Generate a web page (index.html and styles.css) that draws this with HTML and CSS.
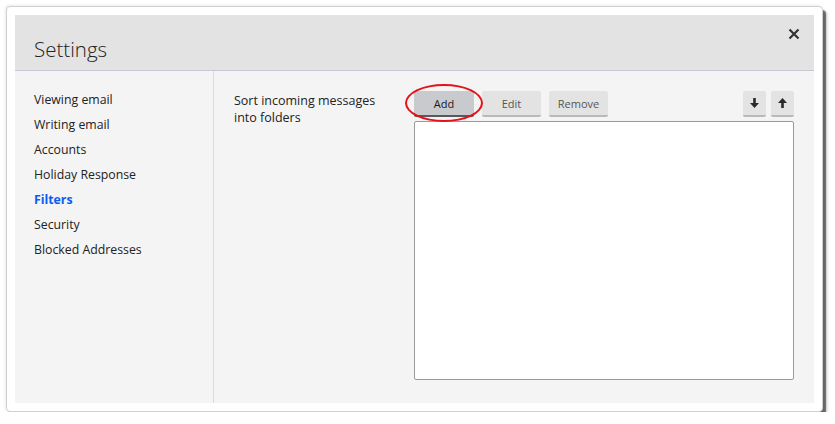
FILE: index.html
```html
<!DOCTYPE html>
<html>
<head>
<meta charset="utf-8">
<link rel="stylesheet" href="styles.css">
</head>
<body>
<div class="frame">
  <div class="dialog">
    <div class="header">
      <h1 class="title">Settings</h1>
      <button class="close" aria-label="Close">
        <svg width="12" height="12" viewBox="0 0 12 12"><path d="M1.5 1.5L10.5 10.5M10.5 1.5L1.5 10.5" stroke="#333" stroke-width="2.2" fill="none"/></svg>
      </button>
    </div>
    <div class="body">
      <nav class="nav">
        <a class="nav-item">Viewing email</a>
        <a class="nav-item">Writing email</a>
        <a class="nav-item">Accounts</a>
        <a class="nav-item">Holiday Response</a>
        <a class="nav-item active">Filters</a>
        <a class="nav-item">Security</a>
        <a class="nav-item">Blocked Addresses</a>
      </nav>
      <div class="content">
        <div class="label">Sort incoming messages into folders</div>
        <div class="panel">
          <div class="toolbar">
            <div class="btn-wrap">
              <button class="btn primary">Add</button>
              <span class="ring"></span>
            </div>
            <button class="btn">Edit</button>
            <button class="btn">Remove</button>
            <div class="spacer"></div>
            <button class="btn icon">
              <svg width="9" height="10" viewBox="0 0 9 10"><path d="M3.2 0H5.8V5H9L4.5 10L0 5H3.2Z" fill="#2a2a2a"/></svg>
            </button>
            <button class="btn icon">
              <svg width="9" height="10" viewBox="0 0 9 10"><path d="M3.2 10H5.8V5H9L4.5 0L0 5H3.2Z" fill="#2a2a2a"/></svg>
            </button>
          </div>
          <div class="list"></div>
        </div>
      </div>
    </div>
  </div>
</div>
</body>
</html>
```

FILE: styles.css
```css
html, body {
  margin: 0;
  padding: 0;
  background: #ffffff;
}
body {
  font-family: "Open Sans", "Noto Sans", sans-serif;
  color: #222;
}
.frame {
  margin: 6px 0 0 6px;
  width: 799px;
  height: 388px;
  padding: 8px;
  background: #fff;
  border: 1px solid #d0d0d0;
  border-radius: 4px;
  box-shadow: 3px 4px 1px rgba(0,0,0,0.5), 4px 5px 3px rgba(0,0,0,0.2), -1px -1px 3px rgba(0,0,0,0.08);
}
.dialog {
  width: 799px;
  height: 388px;
  display: flex;
  flex-direction: column;
  background: #f4f4f4;
}
.header {
  background: #e3e3e3;
  border-bottom: 1px solid #c9c9d1;
  display: flex;
  align-items: flex-start;
  justify-content: space-between;
  box-sizing: border-box;
  height: 56px;
}
.title {
  margin: 20px 0 0 19px;
  font-size: 20.5px;
  font-weight: 300;
  line-height: 28px;
  color: #222;
}
.close {
  margin: 11px 12px 0 0;
  width: 16px;
  height: 16px;
  padding: 0;
  border: 0;
  background: transparent;
  display: flex;
  align-items: center;
  justify-content: center;
}
.body {
  flex: 1;
  display: flex;
}
.nav {
  width: 199px;
  border-right: 1px solid #dcdcdc;
  padding: 16px 0 0 19px;
  box-sizing: border-box;
  display: flex;
  flex-direction: column;
}
.nav-item {
  font-size: 12.3px;
  line-height: 25px;
  color: #222;
}
.nav-item.active {
  color: #0a5cf5;
  font-weight: 700;
}
.content {
  flex: 1;
  display: flex;
  padding: 20px 20px 0 20px;
}
.label {
  width: 160px;
  margin-right: 20px;
  font-size: 12.5px;
  line-height: 17px;
  color: #222;
  padding-top: 1px;
}
.panel {
  flex: 1;
  display: flex;
  flex-direction: column;
}
.toolbar {
  display: flex;
  align-items: flex-start;
  gap: 8px;
  height: 26px;
  margin-bottom: 4px;
}
.btn-wrap {
  position: relative;
  display: flex;
}
.btn {
  height: 26px;
  min-width: 59px;
  padding: 0 8px;
  box-sizing: border-box;
  border: 0;
  border-bottom: 2px solid #b9b9b9;
  border-radius: 2px;
  background: #e3e3e3;
  font-family: "Open Sans", "Noto Sans", sans-serif;
  font-size: 11px;
  color: #555;
}
.btn.primary {
  width: 60px;
  background: #c9cacd;
  border-bottom-color: #58595c;
  color: #1a1a1a;
}
.ring {
  position: absolute;
  left: -9px;
  top: -7px;
  width: 78px;
  height: 38px;
  box-sizing: border-box;
  border: 2px solid #e2131b;
  border-radius: 50%;
}
.spacer {
  flex: 1;
}
.btn.icon {
  min-width: 23px;
  width: 23px;
  padding: 0;
  display: flex;
  align-items: center;
  justify-content: center;
}
.btn.icon + .btn.icon {
  margin-left: -3px;
}
.list {
  height: 259px;
  background: #fff;
  border: 1px solid #9a9a9a;
  border-radius: 2px;
  box-sizing: border-box;
}
```
